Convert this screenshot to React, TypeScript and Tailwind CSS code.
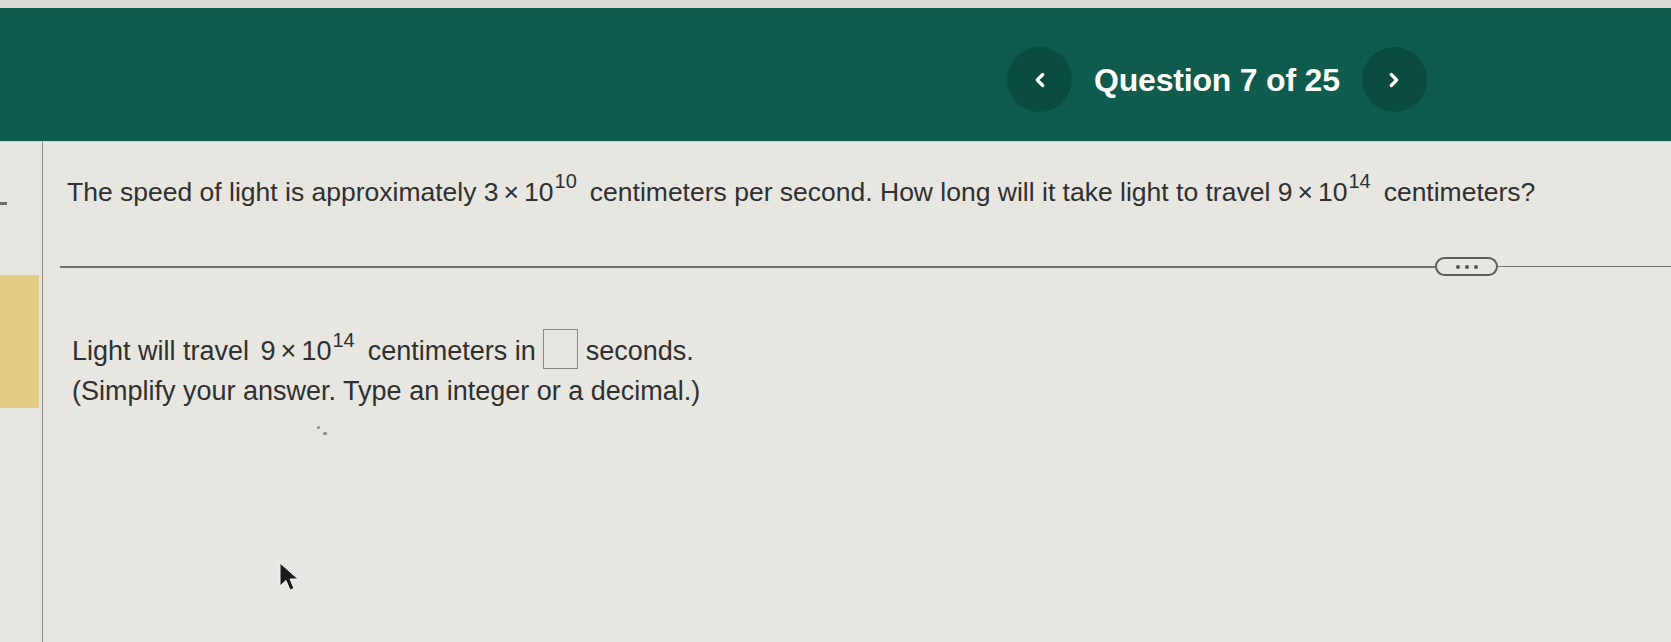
import { ChevronLeft, ChevronRight } from 'lucide-react'

const font = "font-['Liberation_Sans',Arial,sans-serif]"

function Power({ base, exp, lead = false }: { base: string; exp: string; lead?: boolean }) {
  return (
    <span className={`whitespace-nowrap ${lead ? 'ml-[4px]' : ''}`}>
      {base}
      <span className="mx-[5px]">×</span>
      10
      <span className="text-[20px] leading-none align-[13px] ml-[1px] mr-[13px]">{exp}</span>
    </span>
  )
}

function NavButton({ dir }: { dir: 'prev' | 'next' }) {
  return (
    <button className="w-[65px] h-[65px] rounded-full bg-[#0b4c41] flex items-center justify-center text-white">
      {dir === 'prev' ? (
        <ChevronLeft size={22} strokeWidth={3.5} />
      ) : (
        <ChevronRight size={22} strokeWidth={3.5} />
      )}
    </button>
  )
}

export default function App() {
  return (
    <div className={`${font} relative w-full h-[642px] overflow-hidden bg-[#e7e6e1] text-[#303030]`}>
      <div className="h-[8px] bg-[#dcdad3]" />
      <header className="h-[134px] bg-[#0f5c4e] border-b border-[#cfd6d2] flex items-center pl-[1007px] pt-[10px] gap-[22px]">
        <NavButton dir="prev" />
        <h1 className="text-[32px] font-bold text-white tracking-[-0.2px]">Question 7 of 25</h1>
        <NavButton dir="next" />
      </header>

      <div className="flex h-[500px]">
        <aside className="w-[43px] shrink-0 border-r-[1.5px] border-[#8e8e8b] flex flex-col">
          <div className="mt-[60px] w-[7px] h-[3px] bg-[#6b6b68]" />
          <div className="mt-[70px] w-[39px] h-[133px] bg-[#e3cc84]" />
        </aside>

        <main className="flex-1 pt-[29px]">
          <p className="pl-[24px] text-[26.5px] leading-[31px]">
            The speed of light is approximately <Power base="3" exp="10" />
            centimeters per second. How long will it take light to travel <Power base="9" exp="14" />
            centimeters?
          </p>

          <div className="mt-[49px] pl-[17px] flex items-center">
            <div className="flex-1 h-[2px] bg-[#707070]" />
            <button className="w-[63px] h-[19px] rounded-full border-2 border-[#5c5c5c] flex items-center justify-center gap-[5px]">
              <span className="w-[4px] h-[4px] rounded-full bg-[#555]" />
              <span className="w-[4px] h-[4px] rounded-full bg-[#555]" />
              <span className="w-[4px] h-[4px] rounded-full bg-[#555]" />
            </button>
            <div className="w-[173px] h-[1.5px] bg-[#777]" />
          </div>

          <div className="pl-[29px] mt-[53px] text-[27px] leading-[40px]">
            <p>
              Light will travel <Power base="9" exp="14" lead />
              centimeters in{' '}
              <span className="inline-block w-[35px] h-[40px] border-[1.5px] border-[#8a8a8a] align-[-9px]" />{' '}
              seconds.
            </p>
            <p>(Simplify your answer. Type an integer or a decimal.)</p>
          </div>
        </main>
      </div>

      <span className="absolute left-[317px] top-[426px] w-[3px] h-[3px] rounded-full bg-[#8a8a88]" />
      <span className="absolute left-[323px] top-[432px] w-[4px] h-[3px] rounded-full bg-[#8a8a88]" />

      <svg className="absolute left-[279px] top-[562px]" width="22" height="32" viewBox="0 0 22 32">
        <path d="M1 1 L1 24 L7 18.5 L11 28 L15 26.5 L11 17 L19 17 Z" fill="#1b1b1d" stroke="#f2f2f2" strokeWidth="1" />
      </svg>
    </div>
  )
}
